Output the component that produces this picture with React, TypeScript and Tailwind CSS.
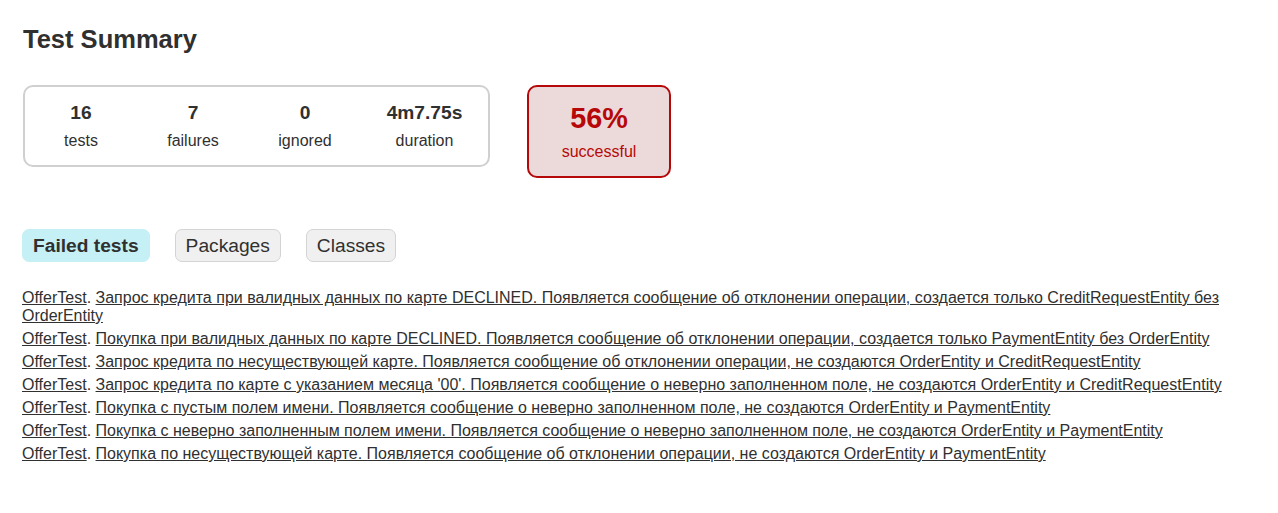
import React from "react";

const stats = [
  { value: "16", label: "tests", width: "w-[112px]" },
  { value: "7", label: "failures", width: "w-[112px]" },
  { value: "0", label: "ignored", width: "w-[112px]" },
  { value: "4m7.75s", label: "duration", width: "w-[127px]" },
];

const failed = [
  "Запрос кредита при валидных данных по карте DECLINED. Появляется сообщение об отклонении операции, создается только CreditRequestEntity без OrderEntity",
  "Покупка при валидных данных по карте DECLINED. Появляется сообщение об отклонении операции, создается только PaymentEntity без OrderEntity",
  "Запрос кредита по несуществующей карте. Появляется сообщение об отклонении операции, не создаются OrderEntity и CreditRequestEntity",
  "Запрос кредита по карте с указанием месяца '00'. Появляется сообщение о неверно заполненном поле, не создаются OrderEntity и CreditRequestEntity",
  "Покупка с пустым полем имени. Появляется сообщение о неверно заполненном поле, не создаются OrderEntity и PaymentEntity",
  "Покупка с неверно заполненным полем имени. Появляется сообщение о неверно заполненном поле, не создаются OrderEntity и PaymentEntity",
  "Покупка по несуществующей карте. Появляется сообщение об отклонении операции, не создаются OrderEntity и PaymentEntity",
];

const tabs = [
  { name: "Failed tests", selected: true },
  { name: "Packages", selected: false },
  { name: "Classes", selected: false },
];

export default function App(): React.ReactElement {
  return (
    <div
      className="min-h-[513px] bg-white px-[22px] pt-[25px] text-[16px] text-[#303030]"
      style={{ fontFamily: '"Liberation Sans", Arial, sans-serif' }}
    >
      <h1 className="ml-[1px] text-[25.5px] font-bold leading-[29px]">Test Summary</h1>

      <div className="ml-[1px] mt-[31px] flex items-start">
        <div className="flex rounded-[10px] border-2 border-[#d0d0d0]">
          {stats.map((s) => (
            <div key={s.label} className={`${s.width} py-[15px] text-center`}>
              <p className="mb-[8px] text-[19.2px] font-bold leading-[22px]">{s.value}</p>
              <p className="leading-[18px]">{s.label}</p>
            </div>
          ))}
        </div>
        <div className="ml-[37px] w-[144px] rounded-[10px] border-2 border-[#b60808] bg-[#ecdada] py-[15px] text-center text-[#b60808]">
          <p className="mb-[8px] text-[28.8px] font-bold leading-[33px]">56%</p>
          <p className="leading-[18px]">successful</p>
        </div>
      </div>

      <ul className="mt-[51px] flex">
        {tabs.map((t) => (
          <li
            key={t.name}
            className={
              t.selected
                ? "mr-[25px] rounded-[7px] border border-[#c5f0f5] bg-[#c5f0f5] px-[10px] py-[5px] text-[19.2px] font-bold leading-[21px]"
                : "mr-[25px] rounded-[7px] border border-[#d4d4d4] bg-[#f0f0f0] px-[10px] py-[5px] text-[19.2px] leading-[21px]"
            }
          >
            {t.name}
          </li>
        ))}
      </ul>

      <ul className="mt-[27px] w-[1234px]">
        {failed.map((name) => (
          <li key={name} className="mb-[5px] leading-[18px]">
            <a href="#" className="underline">
              OfferTest
            </a>
            .{" "}
            <a href="#" className="underline">
              {name}
            </a>
          </li>
        ))}
      </ul>
    </div>
  );
}
